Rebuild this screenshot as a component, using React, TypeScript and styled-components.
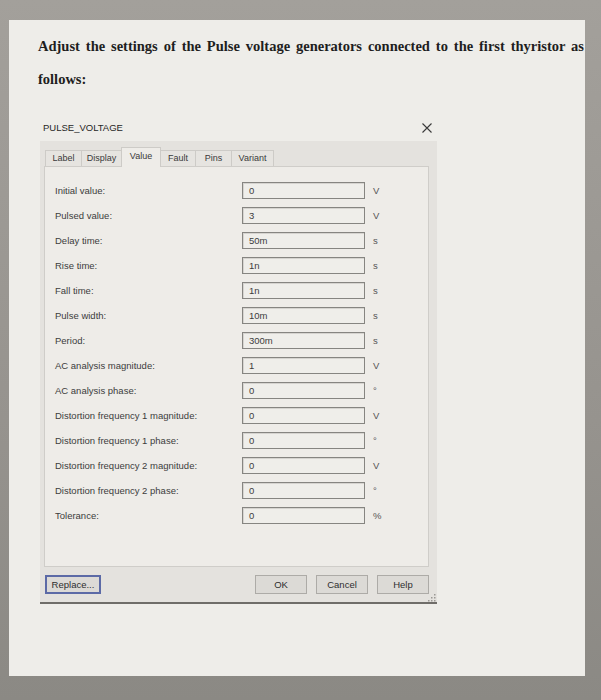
import styled, { createGlobalStyle } from "styled-components";

const GlobalStyle = createGlobalStyle`
  html, body {
    margin: 0;
    padding: 0;
  }
  * {
    box-sizing: border-box;
  }
`;

const rows = [
  { label: "Initial value:", value: "0", unit: "V" },
  { label: "Pulsed value:", value: "3", unit: "V" },
  { label: "Delay time:", value: "50m", unit: "s" },
  { label: "Rise time:", value: "1n", unit: "s" },
  { label: "Fall time:", value: "1n", unit: "s" },
  { label: "Pulse width:", value: "10m", unit: "s" },
  { label: "Period:", value: "300m", unit: "s" },
  { label: "AC analysis magnitude:", value: "1", unit: "V" },
  { label: "AC analysis phase:", value: "0", unit: "°" },
  { label: "Distortion frequency 1 magnitude:", value: "0", unit: "V" },
  { label: "Distortion frequency 1 phase:", value: "0", unit: "°" },
  { label: "Distortion frequency 2 magnitude:", value: "0", unit: "V" },
  { label: "Distortion frequency 2 phase:", value: "0", unit: "°" },
  { label: "Tolerance:", value: "0", unit: "%" },
];

const tabs = [
  { name: "Label", width: 37 },
  { name: "Display", width: 41 },
  { name: "Value", width: 40 },
  { name: "Fault", width: 36 },
  { name: "Pins", width: 37 },
  { name: "Variant", width: 43 },
];

function App() {
  return (
    <>
      <GlobalStyle />
      <Page>
        <Paper>
          <Intro>
            <FirstLine>
              Adjust the settings of the Pulse voltage generators connected to
              the first thyristor as
            </FirstLine>
            <div>follows:</div>
          </Intro>

          <Dialog>
            <TitleBar>
              <Title>PULSE_VOLTAGE</Title>
              <svg width="10" height="10" viewBox="0 0 10 10">
                <path
                  d="M0.5 0.5 L9.5 9.5 M9.5 0.5 L0.5 9.5"
                  stroke="#3a3a3a"
                  strokeWidth="1.1"
                  fill="none"
                />
              </svg>
            </TitleBar>

            <Body>
              <TabRow>
                {tabs.map((t) => (
                  <Tab key={t.name} $w={t.width} $active={t.name === "Value"}>
                    {t.name}
                  </Tab>
                ))}
              </TabRow>

              <Panel>
                {rows.map((r) => (
                  <Row key={r.label}>
                    <FieldLabel>{r.label}</FieldLabel>
                    <Field>{r.value}</Field>
                    <Unit>{r.unit}</Unit>
                  </Row>
                ))}
              </Panel>

              <ButtonRow>
                <Button $focused>Replace...</Button>
                <Spacer />
                <Button>OK</Button>
                <Button>Cancel</Button>
                <Button>Help</Button>
              </ButtonRow>

              <Grip>
                <svg width="8" height="8" viewBox="0 0 8 8">
                  <g fill="#9a9894">
                    <rect x="6" y="0" width="1.5" height="1.5" />
                    <rect x="3" y="3" width="1.5" height="1.5" />
                    <rect x="6" y="3" width="1.5" height="1.5" />
                    <rect x="0" y="6" width="1.5" height="1.5" />
                    <rect x="3" y="6" width="1.5" height="1.5" />
                    <rect x="6" y="6" width="1.5" height="1.5" />
                  </g>
                </svg>
              </Grip>
            </Body>
          </Dialog>
        </Paper>
      </Page>
    </>
  );
}

export default App;

const Page = styled.div`
  width: 601px;
  height: 700px;
  padding: 20px 0 0 9px;
  background: linear-gradient(180deg, #a3a09b 0%, #96938e 60%, #8b8984 100%);
  overflow: hidden;
`;

const Paper = styled.div`
  width: 576px;
  height: 656px;
  padding: 10px 0 0 29px;
  background: #eeede9;
`;

const Intro = styled.div`
  width: 546px;
  font-family: "Liberation Serif", "Times New Roman", serif;
  font-weight: 700;
  font-size: 14.5px;
  line-height: 33px;
  color: #1e1e1e;
`;

const FirstLine = styled.div`
  text-align: justify;
  text-align-last: justify;
`;

// dialog
const Dialog = styled.div`
  width: 397px;
  margin: 18px 0 0 2px;
  font-family: "Liberation Sans", Arial, sans-serif;
  color: #333;
`;

const TitleBar = styled.div`
  height: 27px;
  display: flex;
  align-items: center;
  justify-content: space-between;
  padding: 0 5px 0 3px;
`;

const Title = styled.span`
  font-size: 9.5px;
  color: #262626;
`;

const Body = styled.div`
  position: relative;
  background: #e4e2de;
  padding: 6px 8px 8px 4px;
  border-bottom: 2px solid #6f6d69;
`;

const TabRow = styled.div`
  display: flex;
  align-items: flex-end;
  height: 19px;
  margin-left: 1px;
`;

const Tab = styled.div<{ $active?: boolean; $w: number }>`
  width: ${(p) => p.$w}px;
  height: ${(p) => (p.$active ? "20px" : "16px")};
  margin-bottom: ${(p) => (p.$active ? "-1px" : "0")};
  padding-top: ${(p) => (p.$active ? "3px" : "2px")};
  text-align: center;
  background: ${(p) => (p.$active ? "#eeece8" : "#e6e4e0")};
  border: 1px solid #cdcbc7;
  border-bottom: none;
  margin-right: -1px;
  font-size: 9px;
  color: #3a3a3a;
  position: relative;
  z-index: ${(p) => (p.$active ? 1 : 0)};
`;

const Panel = styled.div`
  height: 401px;
  background: #eeece8;
  border: 1px solid #cfcdc9;
  padding: 11px 0 0 10px;
`;

const Row = styled.div`
  display: grid;
  grid-template-columns: 187px 123px auto;
  height: 25px;
  align-items: center;
`;

const FieldLabel = styled.span`
  font-size: 9.5px;
  color: #3c3c3c;
`;

const Field = styled.div`
  height: 17px;
  border: 1px solid #868581;
  box-shadow: inset 1px 1px 0 #d6d4d0;
  background: #efeeea;
  padding-left: 6px;
  font-size: 9.5px;
  line-height: 15px;
  color: #3c3c3c;
`;

const Unit = styled.span`
  margin-left: 8px;
  font-size: 9.5px;
  color: #555;
`;

const ButtonRow = styled.div`
  display: flex;
  align-items: center;
  gap: 9px;
  margin-top: 8px;
  padding-left: 1px;
`;

const Spacer = styled.div`
  flex: 1;
`;

const Button = styled.div<{ $focused?: boolean }>`
  height: 19px;
  width: ${(p) => (p.$focused ? "56px" : "52px")};
  display: flex;
  align-items: center;
  justify-content: center;
  background: #dcdad6;
  border: ${(p) => (p.$focused ? "2px solid #5c6aa6" : "1px solid #adaba7")};
  font-size: 9.5px;
  color: #2e2e2e;
`;

const Grip = styled.div`
  position: absolute;
  right: 1px;
  bottom: 0px;
  line-height: 0;
`;
